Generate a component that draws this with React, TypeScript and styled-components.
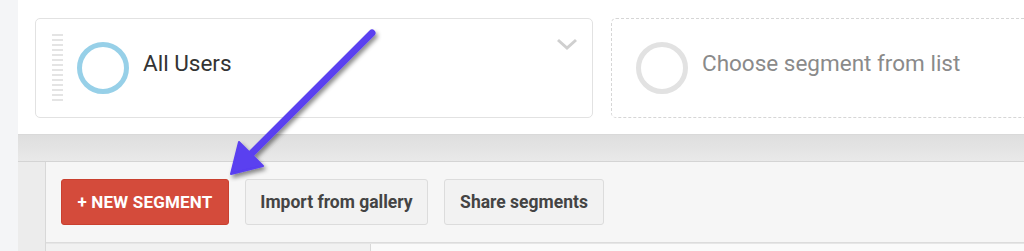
import React from 'react';
import styled, { createGlobalStyle } from 'styled-components';

const GlobalStyle = createGlobalStyle`
  html, body {
    margin: 0;
    padding: 0;
    background: #f4f5f7;
    font-family: Roboto, 'Liberation Sans', Arial, sans-serif;
  }
`;

const Page = styled.div`
  position: relative;
  width: 1024px;
  height: 251px;
  overflow: hidden;
  display: flex;
`;

const SideStrip = styled.div`
  width: 18px;
  flex-shrink: 0;
  background: #f4f5f7;
`;

const Main = styled.div`
  flex: 1;
  display: flex;
  flex-direction: column;
  background: #fff;
`;

const SegmentRow = styled.div`
  height: 134px;
  box-sizing: border-box;
  padding: 18px 0 0 17px;
  display: flex;
  gap: 18px;
`;

interface CardProps {
  dashed?: boolean;
}

const Card = styled.div<CardProps>`
  box-sizing: border-box;
  height: 100px;
  width: ${p => (p.dashed ? 430 : 558)}px;
  flex-shrink: 0;
  border: 1px ${p => (p.dashed ? 'dashed #d6d6d6' : 'solid #e2e2e2')};
  border-radius: 5px;
  display: flex;
  align-items: center;
  position: relative;
  padding-left: ${p => (p.dashed ? 24 : 16)}px;
`;

const Handle = styled.div`
  width: 11px;
  height: 68px;
  margin-right: 14px;
  background: repeating-linear-gradient(
    to bottom,
    #e4e4e4 0px,
    #e4e4e4 2px,
    transparent 2px,
    transparent 5px
  );
`;

interface RingProps {
  color: string;
}

const Ring = styled.div<RingProps>`
  box-sizing: border-box;
  width: 52px;
  height: 52px;
  border-radius: 50%;
  border: 5px solid ${p => p.color};
  flex-shrink: 0;
`;

const CardLabel = styled.span<{ muted?: boolean }>`
  font-size: 22.5px;
  margin-left: ${p => (p.muted ? 14 : 14)}px;
  color: ${p => (p.muted ? '#8a8a8a' : '#333')};
  margin-top: -10px;
`;

const Chevron = styled.svg`
  position: absolute;
  right: 14px;
  top: 18px;
`;

const GreyBar = styled.div`
  height: 28px;
  box-sizing: border-box;
  border-top: 1px solid #d9d9d9;
  background: linear-gradient(to bottom, #dedede, #e9e9e9);
  border-bottom: 1px solid #d4d4d4;
  display: flex;
`;

const Lower = styled.div`
  flex: 1;
  background: #ececec;
  padding-left: 27px;
  display: flex;
`;

const Panel = styled.div`
  flex: 1;
  display: flex;
  flex-direction: column;
  border-left: 1px solid #d8d8d8;
  background: #f6f6f6;
`;

const Toolbar = styled.div`
  height: 81px;
  box-sizing: border-box;
  padding: 17px 0 0 15px;
  display: flex;
  gap: 16px;
  border-bottom: 1px solid #dcdcdc;
`;

interface BtnProps {
  primary?: boolean;
  w: number;
}

const Button = styled.button<BtnProps>`
  box-sizing: border-box;
  height: 46px;
  width: ${p => p.w}px;
  border-radius: 3px;
  font-family: Roboto, 'Liberation Sans', Arial, sans-serif;
  font-weight: 700;
  font-size: ${p => (p.primary ? 17 : 17.5)}px;
  letter-spacing: ${p => (p.primary ? 0.2 : 0)}px;
  color: ${p => (p.primary ? '#fff' : '#444')};
  background: ${p => (p.primary ? '#d44b3b' : '#f2f2f2')};
  border: 1px solid ${p => (p.primary ? '#c9402f' : '#dcdcdc')};
  padding: 0;
`;

const BottomRow = styled.div`
  flex: 1;
  display: flex;
  border-top: 1px solid #e6e6e6;
  background: #f1f1f1;
`;

const BottomCell = styled.div<{ w?: number }>`
  width: ${p => (p.w ? `${p.w}px` : 'auto')};
  flex: ${p => (p.w ? 'none' : 1)};
  border-right: ${p => (p.w ? '1px solid #d9d9d9' : 'none')};
  background: ${p => (p.w ? '#f1f1f1' : '#fafafa')};
`;

const Arrow = styled.svg`
  position: absolute;
  left: 0;
  top: 0;
  pointer-events: none;
`;

export default function App() {
  return (
    <>
      <GlobalStyle />
      <Page>
        <SideStrip />
        <Main>
          <SegmentRow>
            <Card>
              <Handle />
              <Ring color="#97d0e8" />
              <CardLabel>All Users</CardLabel>
              <Chevron width="22" height="14" viewBox="0 0 22 14">
                <path d="M2 3 L11 11 L20 3" fill="none" stroke="#cfcfcf" strokeWidth="3" />
              </Chevron>
            </Card>
            <Card dashed>
              <Ring color="#e2e2e2" />
              <CardLabel muted>Choose segment from list</CardLabel>
            </Card>
          </SegmentRow>
          <GreyBar />
          <Lower>
            <Panel>
              <Toolbar>
                <Button primary w={168}>+ NEW SEGMENT</Button>
                <Button w={183}>Import from gallery</Button>
                <Button w={160}>Share segments</Button>
              </Toolbar>
              <BottomRow>
                <BottomCell w={324} />
                <BottomCell />
              </BottomRow>
            </Panel>
          </Lower>
        </Main>
        <Arrow width="1024" height="251" viewBox="0 0 1024 251">
          <defs>
            <filter id="sh" x="-20%" y="-20%" width="140%" height="140%">
              <feDropShadow dx="2" dy="3" stdDeviation="2" floodColor="#000" floodOpacity="0.45" />
            </filter>
          </defs>
          <g filter="url(#sh)">
            <line x1="372" y1="33" x2="250" y2="155" stroke="#5a3ff0" strokeWidth="7" strokeLinecap="round" />
            <path d="M231 174 L239 142 L263 166 Z" fill="#5a3ff0" stroke="#5a3ff0" strokeWidth="2" strokeLinejoin="round" />
          </g>
        </Arrow>
      </Page>
    </>
  );
}
